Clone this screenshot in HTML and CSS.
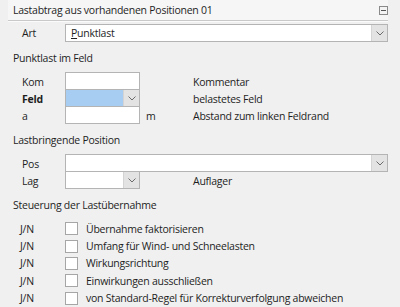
FILE: index.html
```html
<!DOCTYPE html>
<html lang="de">
<head>
    <meta charset="UTF-8">
    <title>Lastabtrag</title>
    <link rel="stylesheet" href="styles.css">
</head>
<body>
    <div class="panel">
        <div class="panel-head">
            <span class="title">Lastabtrag aus vorhandenen Positionen 01</span>
            <span class="collapse"></span>
        </div>

        <div class="row row-art">
            <span class="lbl">Art</span>
            <div class="combo wide">
                <span class="val"><u>P</u>unktlast</span>
                <span class="drop"><svg width="8" height="5" viewBox="0 0 8 5"><path d="M0.5 0.5 L4 4 L7.5 0.5" fill="none" stroke="#6b6b6b" stroke-width="1"/></svg></span>
            </div>
        </div>

        <div class="section">Punktlast im Feld</div>
        <div class="row">
            <span class="lbl">Kom</span>
            <div class="box"></div>
            <span class="unit"></span>
            <span class="hint">Kommentar</span>
        </div>
        <div class="row">
            <span class="lbl bold">Feld</span>
            <div class="combo selected">
                <span class="val"></span>
                <span class="drop"><svg width="8" height="5" viewBox="0 0 8 5"><path d="M0.5 0.5 L4 4 L7.5 0.5" fill="none" stroke="#6b6b6b" stroke-width="1"/></svg></span>
            </div>
            <span class="unit"></span>
            <span class="hint">belastetes Feld</span>
        </div>
        <div class="row">
            <span class="lbl">a</span>
            <div class="box"></div>
            <span class="unit">m</span>
            <span class="hint">Abstand zum linken Feldrand</span>
        </div>

        <div class="section">Lastbringende Position</div>
        <div class="row row-pos">
            <span class="lbl">Pos</span>
            <div class="combo wide">
                <span class="val"></span>
                <span class="drop"><svg width="8" height="5" viewBox="0 0 8 5"><path d="M0.5 0.5 L4 4 L7.5 0.5" fill="none" stroke="#6b6b6b" stroke-width="1"/></svg></span>
            </div>
        </div>
        <div class="row">
            <span class="lbl">Lag</span>
            <div class="combo">
                <span class="val"></span>
                <span class="drop"><svg width="8" height="5" viewBox="0 0 8 5"><path d="M0.5 0.5 L4 4 L7.5 0.5" fill="none" stroke="#6b6b6b" stroke-width="1"/></svg></span>
            </div>
            <span class="unit"></span>
            <span class="hint">Auflager</span>
        </div>

        <div class="section">Steuerung der Lastübernahme</div>
        <div class="checks">
            <div class="check-row"><span class="lbl">J/N</span><span class="check"></span><span class="check-text">Übernahme faktorisieren</span></div>
            <div class="check-row"><span class="lbl">J/N</span><span class="check"></span><span class="check-text">Umfang für Wind- und Schneelasten</span></div>
            <div class="check-row"><span class="lbl">J/N</span><span class="check"></span><span class="check-text">Wirkungsrichtung</span></div>
            <div class="check-row"><span class="lbl">J/N</span><span class="check"></span><span class="check-text">Einwirkungen ausschließen</span></div>
            <div class="check-row"><span class="lbl">J/N</span><span class="check"></span><span class="check-text">von Standard-Regel für Korrekturverfolgung abweichen</span></div>
        </div>
    </div>
</body>
</html>
```

FILE: styles.css
```css
body {
    margin: 0;
    background-color: #f0f0f0;
    font-family: "Open Sans", "Noto Sans", sans-serif;
    font-size: 10.5px;
    letter-spacing: -0.25px;
    color: #1e1e1e;
}
.panel {
    padding: 0 12px 0 8px;
}
.panel-head {
    display: flex;
    align-items: center;
    justify-content: space-between;
    height: 20px;
    padding-left: 5px;
    border-bottom: 1px solid #c9c9c9;
    background-color: #f6f6f6;
    box-shadow: 0 1px 0 #fbfbfb;
}
.collapse {
    position: relative;
    width: 7px;
    height: 7px;
    border: 1px solid #8a8a8a;
    background: #f4f4f4;
}
.collapse::after {
    content: "";
    position: absolute;
    left: 1px;
    right: 1px;
    top: 3px;
    height: 1px;
    background: #555;
}
.row {
    display: grid;
    grid-template-columns: 57px 75px 53px 1fr;
    align-items: center;
    height: 17px;
}
.row-art {
    grid-template-columns: 57px 1fr;
    height: 18px;
    margin-top: 3px;
}
.row-pos {
    grid-template-columns: 57px 1fr;
}
.lbl {
    padding-left: 14px;
}
.bold {
    font-weight: bold;
}
.box, .combo {
    box-sizing: border-box;
    height: 18px;
    border: 1px solid #b4b4b4;
    background: #fff;
    margin-top: -1px;
}
.row-art .combo {
    margin-top: 0;
}
.combo {
    display: flex;
    align-items: stretch;
}
.combo .val {
    flex: 1;
    padding-left: 5px;
    line-height: 16px;
}
.combo .drop {
    width: 15px;
    display: flex;
    align-items: center;
    justify-content: center;
    background: #e3e3e3;
    border-left: 1px solid #d4d4d4;
}
.combo.selected .val {
    background: #a7cdf2;
}
.unit {
    padding-left: 6px;
}
.section {
    padding-left: 5px;
    height: 17px;
    line-height: 17px;
    margin-top: 8px;
    margin-bottom: 6px;
}
.check-row {
    display: grid;
    grid-template-columns: 57px 21px 1fr;
    align-items: center;
    height: 17.4px;
}
.check-row .lbl {
    padding-left: 12px;
}
.check {
    box-sizing: border-box;
    width: 13px;
    height: 13px;
    border: 1px solid #a6a6a6;
    background: #fff;
}
```
